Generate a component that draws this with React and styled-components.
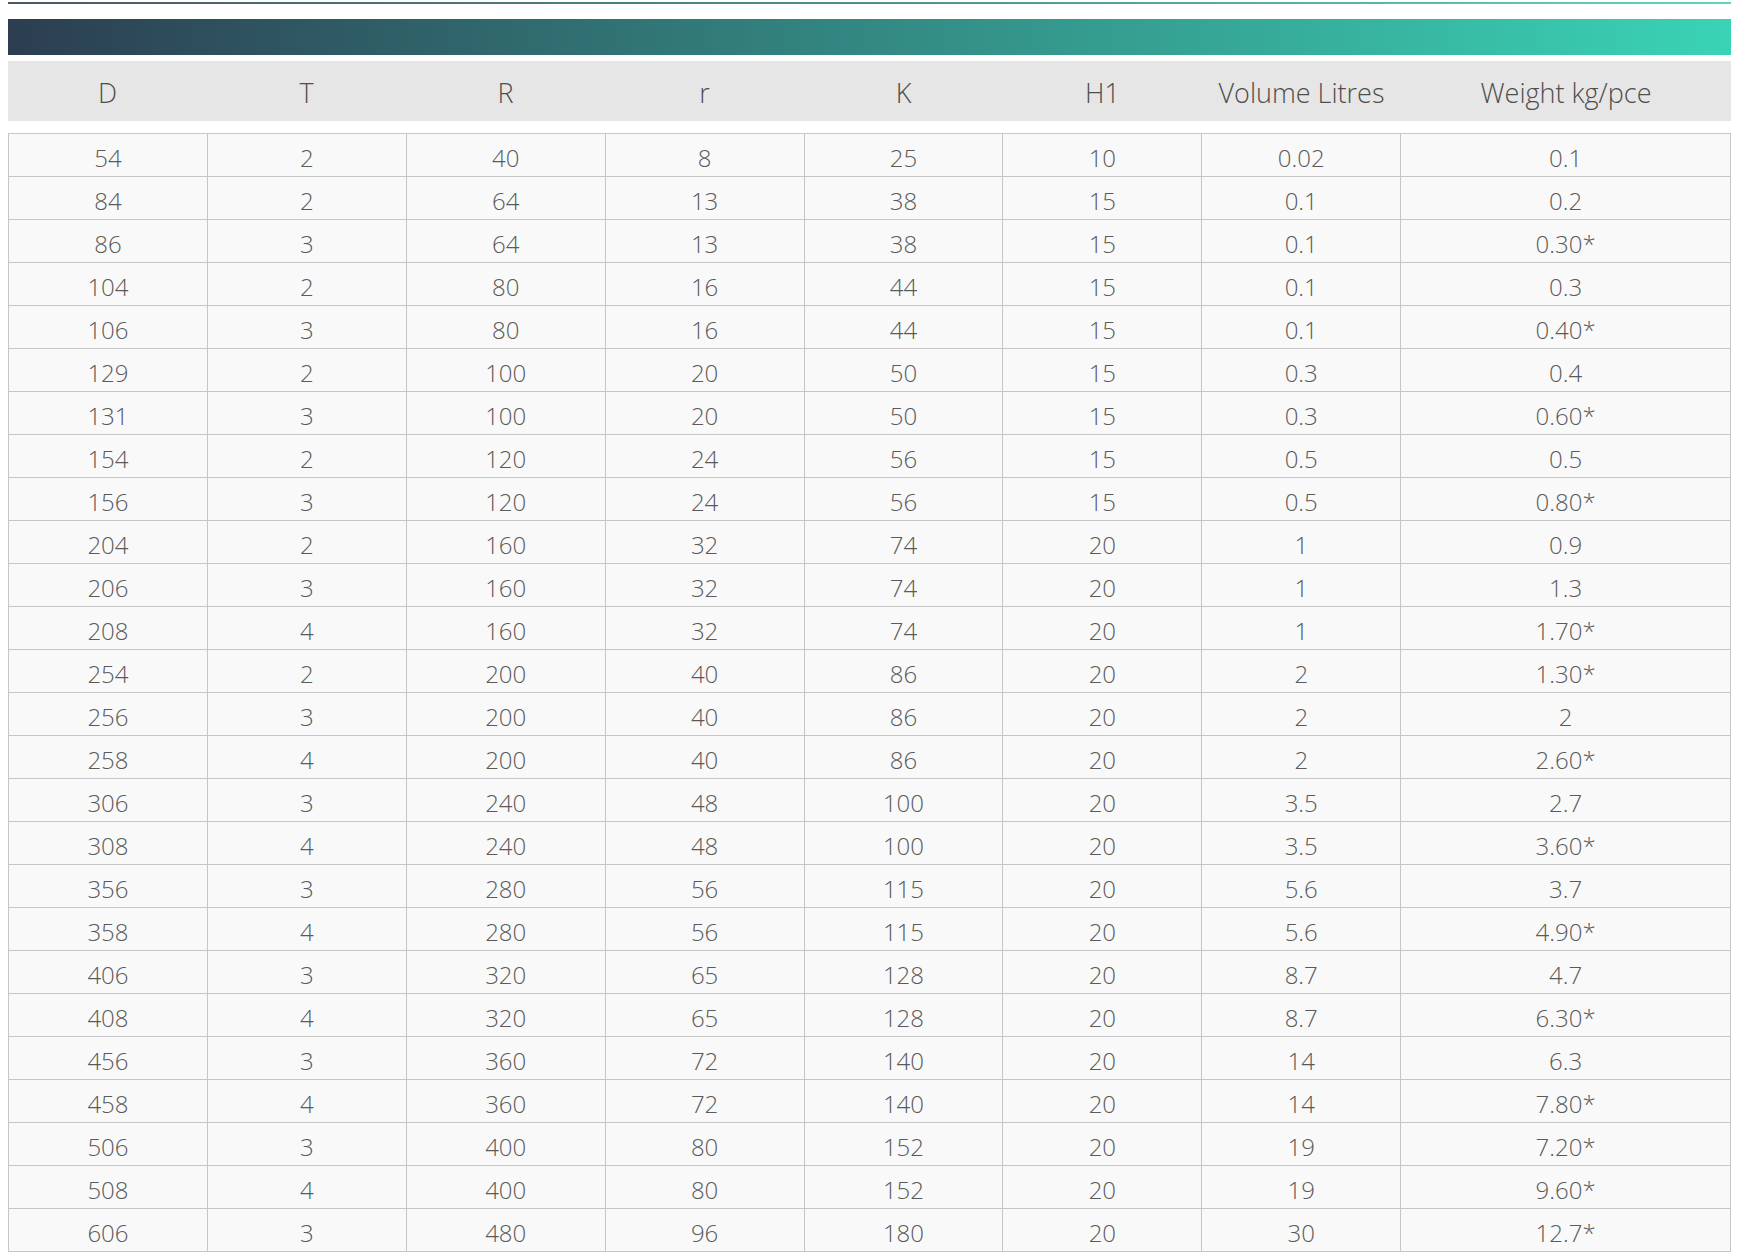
import React from 'react';
import styled, { createGlobalStyle } from 'styled-components';

const GlobalStyle = createGlobalStyle`
  html, body {
    margin: 0;
    background: #fff;
  }
  body {
    padding: 0 8px;
    font-family: 'Open Sans', 'Noto Sans', 'Liberation Sans', sans-serif;
  }
`;

const Page = styled.div`
  padding-top: 2px;
`;

const TopRule = styled.div`
  height: 2px;
  background: linear-gradient(90deg, #4a5866 0%, #4f8f8c 50%, #62d3bb 100%);
`;

const Banner = styled.div`
  margin-top: 15px;
  height: 36px;
  background: linear-gradient(90deg, #2c3e50 0%, #3ad3b5 100%);
`;

const columns = 'repeat(7, 199fr) 330fr';

const HeadRow = styled.div`
  margin-top: 6px;
  height: 60px;
  display: grid;
  grid-template-columns: ${columns};
  background: #e6e6e6;
`;

const HeadCell = styled.div`
  display: flex;
  align-items: center;
  justify-content: center;
  padding-top: 2px;
  font-size: 27px;
  font-weight: 300;
  color: #4e4e4e;
`;

const Body = styled.div`
  margin-top: 12px;
  border-top: 1px solid #c6c6c6;
  border-left: 1px solid #c6c6c6;
`;

const Row = styled.div`
  display: grid;
  grid-template-columns: ${columns};
  background: #f9f9f9;
`;

const Cell = styled.div`
  height: 43px;
  display: flex;
  align-items: center;
  justify-content: center;
  padding-top: 5px;
  box-sizing: border-box;
  border-right: 1px solid #c6c6c6;
  border-bottom: 1px solid #c6c6c6;
  font-size: 24px;
  font-weight: 300;
  color: #5a5a5a;
`;

const headers = ['D', 'T', 'R', 'r', 'K', 'H1', 'Volume Litres', 'Weight kg/pce'];

const rows = [
  ['54', '2', '40', '8', '25', '10', '0.02', '0.1'],
  ['84', '2', '64', '13', '38', '15', '0.1', '0.2'],
  ['86', '3', '64', '13', '38', '15', '0.1', '0.30*'],
  ['104', '2', '80', '16', '44', '15', '0.1', '0.3'],
  ['106', '3', '80', '16', '44', '15', '0.1', '0.40*'],
  ['129', '2', '100', '20', '50', '15', '0.3', '0.4'],
  ['131', '3', '100', '20', '50', '15', '0.3', '0.60*'],
  ['154', '2', '120', '24', '56', '15', '0.5', '0.5'],
  ['156', '3', '120', '24', '56', '15', '0.5', '0.80*'],
  ['204', '2', '160', '32', '74', '20', '1', '0.9'],
  ['206', '3', '160', '32', '74', '20', '1', '1.3'],
  ['208', '4', '160', '32', '74', '20', '1', '1.70*'],
  ['254', '2', '200', '40', '86', '20', '2', '1.30*'],
  ['256', '3', '200', '40', '86', '20', '2', '2'],
  ['258', '4', '200', '40', '86', '20', '2', '2.60*'],
  ['306', '3', '240', '48', '100', '20', '3.5', '2.7'],
  ['308', '4', '240', '48', '100', '20', '3.5', '3.60*'],
  ['356', '3', '280', '56', '115', '20', '5.6', '3.7'],
  ['358', '4', '280', '56', '115', '20', '5.6', '4.90*'],
  ['406', '3', '320', '65', '128', '20', '8.7', '4.7'],
  ['408', '4', '320', '65', '128', '20', '8.7', '6.30*'],
  ['456', '3', '360', '72', '140', '20', '14', '6.3'],
  ['458', '4', '360', '72', '140', '20', '14', '7.80*'],
  ['506', '3', '400', '80', '152', '20', '19', '7.20*'],
  ['508', '4', '400', '80', '152', '20', '19', '9.60*'],
  ['606', '3', '480', '96', '180', '20', '30', '12.7*'],
];

const App = () => {
  return (
    <Page>
      <GlobalStyle />
      <TopRule />
      <Banner />
      <HeadRow>
        {headers.map(h => (
          <HeadCell key={h}>{h}</HeadCell>
        ))}
      </HeadRow>
      <Body>
        {rows.map((row, i) => (
          <Row key={i}>
            {row.map((value, j) => (
              <Cell key={j}>{value}</Cell>
            ))}
          </Row>
        ))}
      </Body>
    </Page>
  );
};

export default App;
